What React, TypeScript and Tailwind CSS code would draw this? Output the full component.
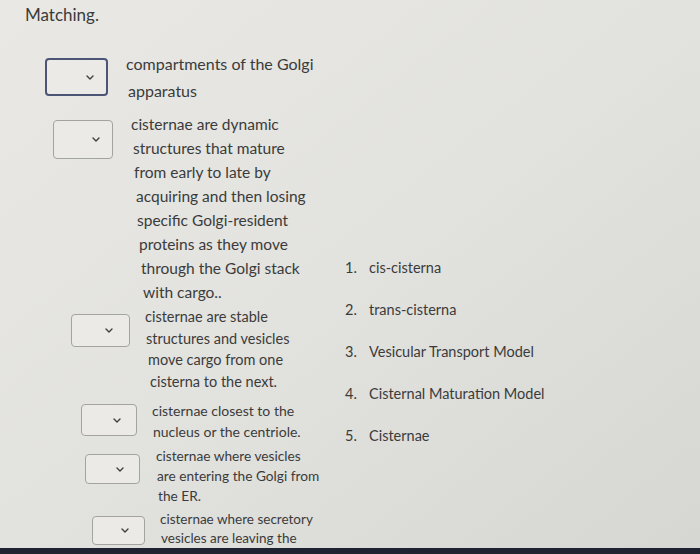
import React from 'react';

// Select box with a small chevron; the active one gets a dark ring
const Dropdown = ({ className, focused }: { className: string; focused?: boolean }) => (
  <div
    className={`shrink-0 flex items-center justify-end rounded-[4px] bg-[#eceae6] ${
      focused ? 'border-2 border-[#4d5577]' : 'border border-[#a3a3a0]'
    } ${className}`}
  >
    <svg width="8" height="5" viewBox="0 0 8 5" className="text-[#3f3f3f]">
      <polyline points="1,1 4,4 7,1" fill="none" stroke="currentColor" strokeWidth="1.4" strokeLinecap="round" strokeLinejoin="round" />
    </svg>
  </div>
);

const answers = ['cis-cisterna', 'trans-cisterna', 'Vesicular Transport Model', 'Cisternal Maturation Model', 'Cisternae'];

export default function App() {
  return (
    <div className="w-[700px] h-[554px] flex flex-col overflow-hidden bg-gradient-to-br from-[#e9e8e4] via-[#e2e2de] to-[#d6d7d3] text-[#3b3b3b] font-['Lato','Open_Sans',sans-serif]">
      <div className="flex flex-1 overflow-hidden">
        {/* prompts */}
        <div className="w-[345px] shrink-0 flex flex-col">
          <h1 className="pl-[25px] pt-[4px] text-[17px] leading-[22px]">Matching.</h1>

          <div className="flex mt-[24px] text-[16px] leading-[27px]">
            <Dropdown focused className="ml-[45px] mt-[8px] w-[63px] h-[38px] pr-[12px]" />
            <div className="ml-[18px]">
              <div>compartments of the Golgi</div>
              <div className="pl-[2px]">apparatus</div>
            </div>
          </div>

          <div className="flex mt-[8px] text-[15.5px] leading-[24px]">
            <Dropdown className="ml-[53px] mt-[8px] w-[60px] h-[39px] pr-[12px]" />
            <div className="ml-[18px]">
              <div>cisternae are dynamic</div>
              <div className="pl-[2px]">structures that mature</div>
              <div className="pl-[3px]">from early to late by</div>
              <div className="pl-[5px]">acquiring and then losing</div>
              <div className="pl-[6px]">specific Golgi-resident</div>
              <div className="pl-[8px]">proteins as they move</div>
              <div className="pl-[10px]">through the Golgi stack</div>
              <div className="pl-[12px]">with cargo..</div>
            </div>
          </div>

          <div className="flex mt-[2px] text-[14.5px] leading-[21.5px]">
            <Dropdown className="ml-[71px] mt-[8px] w-[59px] h-[33px] pr-[16px]" />
            <div className="ml-[15px]">
              <div>cisternae are stable</div>
              <div className="pl-[1px]">structures and vesicles</div>
              <div className="pl-[3px]">move cargo from one</div>
              <div className="pl-[5px]">cisterna to the next.</div>
            </div>
          </div>

          <div className="flex mt-[8px] text-[14px] leading-[21px]">
            <Dropdown className="ml-[81px] mt-[4px] w-[56px] h-[32px] pr-[15px]" />
            <div className="ml-[15px]">
              <div>cisternae closest to the</div>
              <div className="pl-[1px]">nucleus or the centriole.</div>
            </div>
          </div>

          <div className="flex mt-[4px] text-[13.7px] leading-[20px]">
            <Dropdown className="ml-[85px] mt-[8px] w-[55px] h-[30px] pr-[15px]" />
            <div className="ml-[16px]">
              <div>cisternae where vesicles</div>
              <div className="pl-[1px]">are entering the Golgi from</div>
              <div className="pl-[2px]">the ER.</div>
            </div>
          </div>

          <div className="flex mt-[4px] text-[13.5px] leading-[19px]">
            <Dropdown className="ml-[92px] mt-[6px] w-[53px] h-[29px] pr-[15px]" />
            <div className="ml-[15px]">
              <div>cisternae where secretory</div>
              <div className="pl-[1px]">vesicles are leaving the</div>
            </div>
          </div>
        </div>

        {/* answer list */}
        <ol className="pt-[247px] text-[14.5px]">
          {answers.map((a, i) => (
            <li key={a} className="flex items-center h-[42px]">
              <span className="w-[24px]">{i + 1}.</span>
              <span>{a}</span>
            </li>
          ))}
        </ol>
      </div>
      <div className="h-[6px] shrink-0 bg-[#1d2331]" />
    </div>
  );
}
